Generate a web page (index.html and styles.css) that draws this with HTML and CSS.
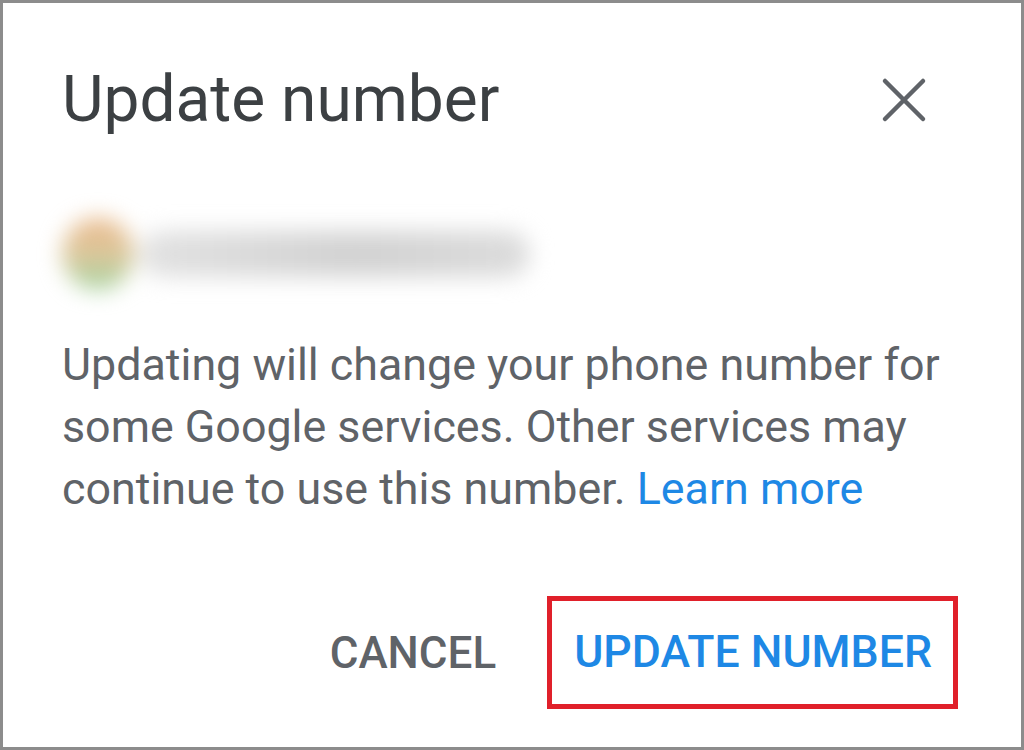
FILE: index.html
```html
<!DOCTYPE html>
<html lang="en">
<head>
    <meta charset="UTF-8">
    <meta name="viewport" content="width=device-width, initial-scale=1.0">
    <title>Update number</title>
    <link rel="stylesheet" href="styles.css">
</head>
<body>
    <div class="dialog">
        <header class="dialog-header">
            <h1>Update number</h1>
            <button class="close" aria-label="Close">
                <svg width="48" height="48" viewBox="0 0 48 48">
                    <path d="M5 5 L43 43 M43 5 L5 43" stroke="#5f6368" stroke-width="4.5" stroke-linecap="round" fill="none"/>
                </svg>
            </button>
        </header>
        <!-- account row is blurred out -->
        <div class="account">
            <div class="avatar"></div>
            <div class="account-name"></div>
        </div>
        <p class="message">
            Updating will change your phone number for some Google services. Other services may continue to use this number. <a href="#">Learn more</a>
        </p>
        <div class="actions">
            <button class="btn cancel">CANCEL</button>
            <div class="highlight">
                <button class="btn primary">UPDATE NUMBER</button>
            </div>
        </div>
    </div>
</body>
</html>
```

FILE: styles.css
```css
html, body {
    margin: 0;
    padding: 0;
    background: #fff;
}
body {
    font-family: Roboto, "Noto Sans", Arial, sans-serif;
}
.dialog {
    box-sizing: border-box;
    width: 1024px;
    height: 750px;
    border: 3px solid #8c8c8c;
    padding: 58px 63px 0 59px;
    overflow: hidden;
}
.dialog-header {
    display: flex;
    align-items: center;
    justify-content: space-between;
}
.dialog-header h1 {
    margin: 0;
    font-size: 64px;
    font-weight: 400;
    line-height: 77px;
    color: #3c4043;
}
.close {
    border: 0;
    background: none;
    padding: 0;
    margin-right: 30px;
    width: 48px;
    height: 48px;
}
.account {
    display: flex;
    align-items: center;
    height: 100px;
    margin-top: 66px;
    filter: blur(11px);
}
.avatar {
    width: 72px;
    height: 72px;
    border-radius: 50%;
    background: linear-gradient(#ebb88a 0%, #dcc79c 50%, #a2d4a0 100%);
}
.account-name {
    width: 390px;
    height: 46px;
    margin-left: 6px;
    background: linear-gradient(90deg, #e2e2e2, #d2d2d2 55%, #dcdcdc);
    border-radius: 23px;
}
.message {
    margin: 30px 0 0;
    font-size: 44.8px;
    line-height: 62px;
    color: #5f6368;
}
.message a {
    color: #1e88e5;
    text-decoration: none;
}
.actions {
    display: flex;
    justify-content: flex-end;
    align-items: center;
    gap: 51px;
    margin-top: 76px;
}
.btn {
    border: 0;
    background: none;
    font-family: inherit;
    font-size: 44px;
    font-weight: 500;
    padding: 0;
    line-height: 54px;
}
.cancel {
    color: #5f6368;
}
.primary {
    color: #1e88e5;
    font-size: 44.6px;
}
.highlight {
    border: 5px solid #e0202a;
    padding: 24px 21px 25px 22px;
}
```
